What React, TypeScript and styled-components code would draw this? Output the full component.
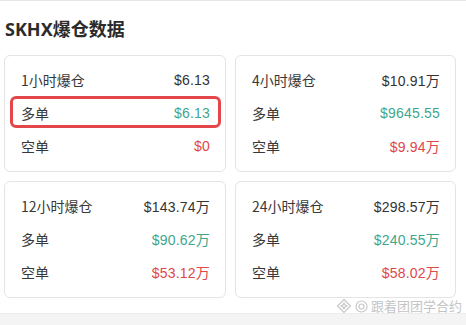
import React from "react";
import styled, { createGlobalStyle } from "styled-components";

const GlobalStyle = createGlobalStyle`
  html, body { margin: 0; padding: 0; background: #ffffff; }
  body { font-family: "Noto Sans", "Noto Sans CJK SC", sans-serif; }
  * { box-sizing: border-box; }
`;

const Page = styled.div`
  position: relative;
  width: 466px;
  height: 325px;
  overflow: hidden;
  border-top: 1px solid #e6e6e6;
  display: flex;
  flex-direction: column;
`;

const Content = styled.div`
  flex: 1;
  padding: 16px 10px 0 4px;
`;

const Title = styled.h2`
  margin: 0 0 13px 1px;
  font-family: "Noto Sans", "Noto Sans CJK SC", sans-serif;
  font-size: 18px;
  line-height: 25px;
  font-weight: 700;
  color: #2b2b2b;
`;

const Grid = styled.div`
  display: grid;
  grid-template-columns: 222px 221px;
  column-gap: 9px;
  row-gap: 9px;
`;

const Card = styled.div`
  border: 1px solid #e4e4e4;
  border-radius: 6px;
  background: #fff;
  padding: 13px 15px 14px 16px;
  display: flex;
  flex-direction: column;
  gap: 11px;
`;

const Row = styled.div<{ $highlight?: boolean }>`
  position: relative;
  display: flex;
  justify-content: space-between;
  align-items: center;
  height: 22px;
  &::before {
    content: "";
    display: ${(p) => (p.$highlight ? "block" : "none")};
    position: absolute;
    top: -6px;
    bottom: -4px;
    left: -11px;
    right: -11px;
    border: 3px solid #e3474a;
    border-radius: 6px;
  }
`;

const Label = styled.span`
  font-family: "Noto Sans CJK SC", "Noto Sans", sans-serif;
  font-size: 14px;
  color: #383838;
`;

const Value = styled.span<{ $tone: "dark" | "green" | "red" }>`
  font-family: "Liberation Sans", "Noto Sans CJK SC", sans-serif;
  font-size: 14px;
  letter-spacing: 0.2px;
  color: ${(p) =>
    p.$tone === "green" ? "#3fa68e" : p.$tone === "red" ? "#e0474b" : "#333"};
`;

const Footer = styled.div`
  height: 12px;
  background: #f4f4f4;
  border-top: 1px solid #ececec;
`;

const Watermark = styled.div`
  position: absolute;
  right: 4px;
  bottom: 11px;
  display: flex;
  align-items: center;
  gap: 3px;
  color: #c4c4c4;
  font-family: "Noto Sans CJK SC", sans-serif;
  font-size: 13px;
  line-height: 16px;
`;

type Tone = "dark" | "green" | "red";
interface Item { label: string; value: string; tone: Tone; highlight?: boolean }

const cards: Item[][] = [
  [
    { label: "1小时爆仓", value: "$6.13", tone: "dark" },
    { label: "多单", value: "$6.13", tone: "green", highlight: true },
    { label: "空单", value: "$0", tone: "red" },
  ],
  [
    { label: "4小时爆仓", value: "$10.91万", tone: "dark" },
    { label: "多单", value: "$9645.55", tone: "green" },
    { label: "空单", value: "$9.94万", tone: "red" },
  ],
  [
    { label: "12小时爆仓", value: "$143.74万", tone: "dark" },
    { label: "多单", value: "$90.62万", tone: "green" },
    { label: "空单", value: "$53.12万", tone: "red" },
  ],
  [
    { label: "24小时爆仓", value: "$298.57万", tone: "dark" },
    { label: "多单", value: "$240.55万", tone: "green" },
    { label: "空单", value: "$58.02万", tone: "red" },
  ],
];

export default function App() {
  return (
    <>
      <GlobalStyle />
      <Page>
        <Content>
          <Title>SKHX爆仓数据</Title>
          <Grid>
            {cards.map((rows, i) => (
              <Card key={i}>
                {rows.map((r, j) => (
                  <Row key={j} $highlight={r.highlight}>
                    <Label>{r.label}</Label>
                    <Value $tone={r.tone}>{r.value}</Value>
                  </Row>
                ))}
              </Card>
            ))}
          </Grid>
        </Content>
        <Footer />
        <Watermark>
          <svg width="16" height="16" viewBox="0 0 16 16" fill="none" stroke="#c8c8c8" strokeWidth="1.2">
            <path d="M8 1.5 L14.5 8 L8 14.5 L1.5 8 Z" />
            <path d="M8 5 L9 7 L11 8 L9 9 L8 11 L7 9 L5 8 L7 7 Z" />
          </svg>
          <svg width="13" height="13" viewBox="0 0 13 13" fill="none" stroke="#c8c8c8" strokeWidth="1.2">
            <circle cx="6.5" cy="6.5" r="5.5" />
            <circle cx="6.5" cy="6.5" r="2.5" />
          </svg>
          <span>跟着团团学合约</span>
        </Watermark>
      </Page>
    </>
  );
}
